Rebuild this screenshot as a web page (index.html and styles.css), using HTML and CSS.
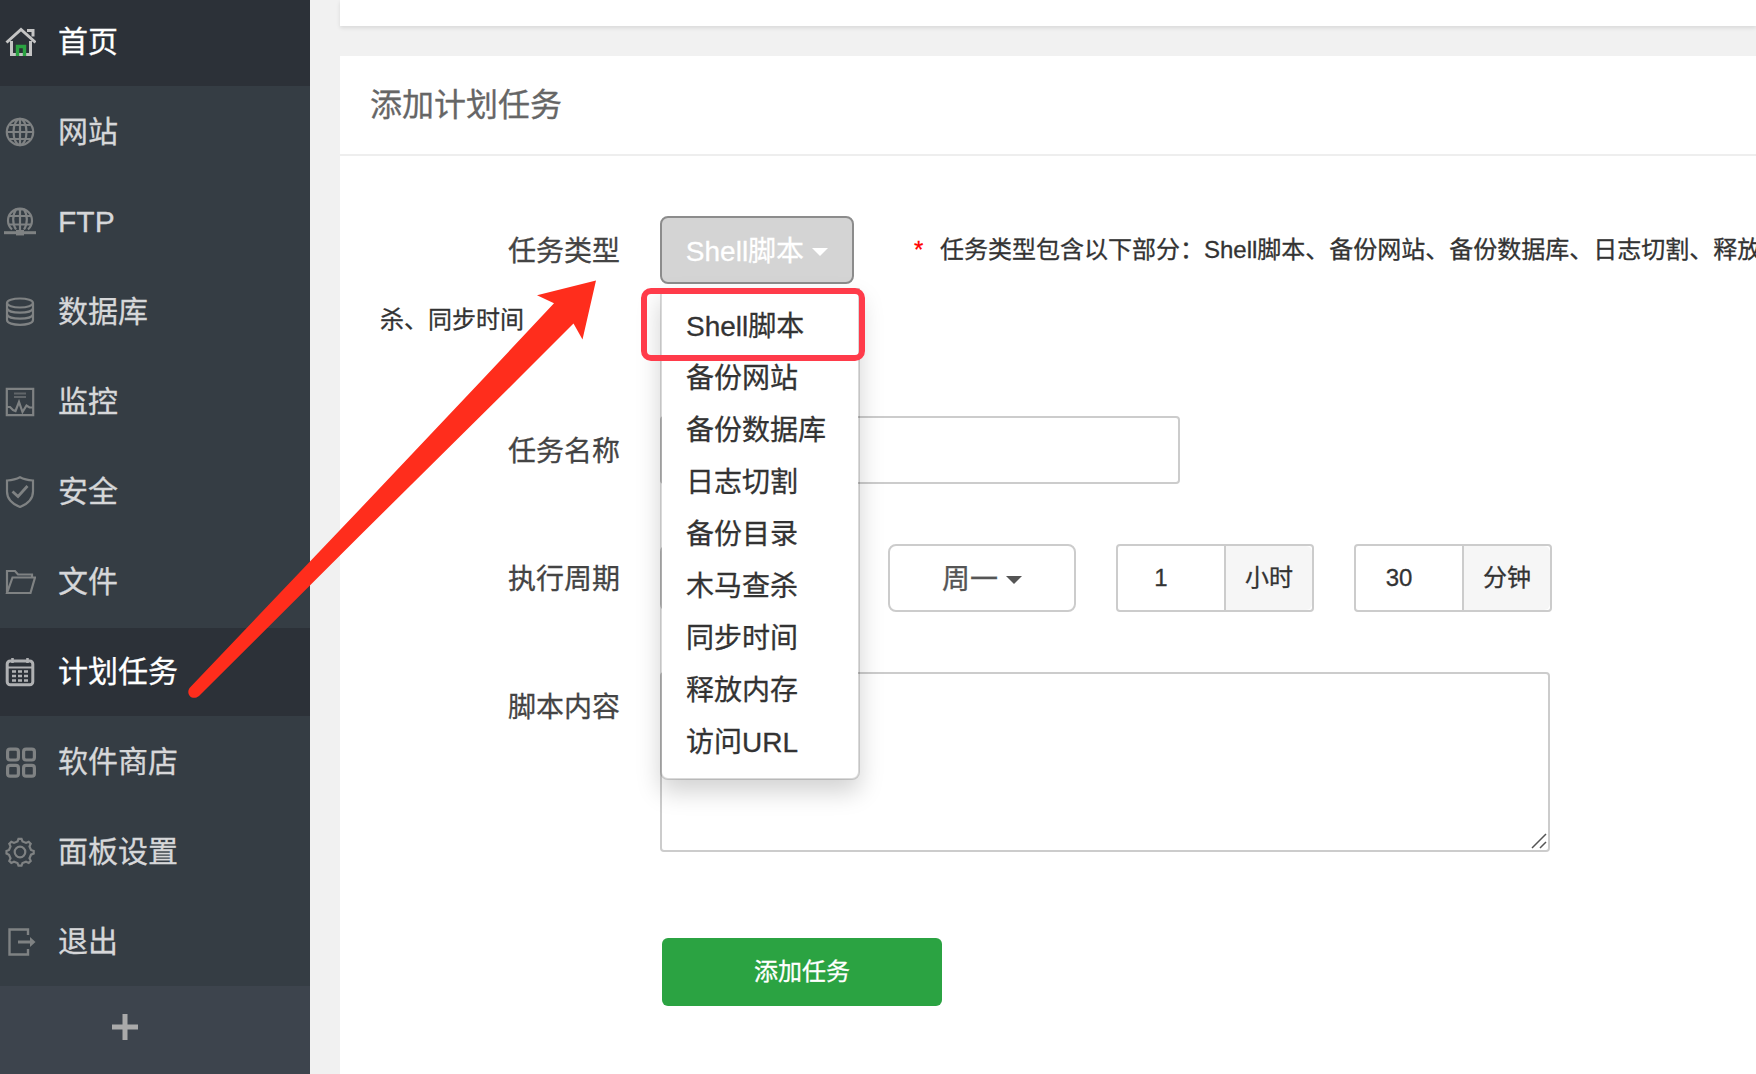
FILE: index.html
```html
<!DOCTYPE html>
<html lang="zh-CN">
<head>
  <meta charset="UTF-8" />
  <title>计划任务</title>
  <meta name="viewport" content="width=device-width, initial-scale=1.0" />
  <link rel="stylesheet" href="styles.css">
</head>
<body>
  <nav class="sidebar">
    <ul class="menu">
      <li class="current">
        <svg class="icon" viewBox="0 0 32 32"><path d="M2.5 16.5 17 3.5l14.500 13M23 4.500h6v6M7.500 15v13.500h19V15" stroke="#c4c4c4" stroke-width="3"/><path d="M13.500 30v-9.500h7V30" stroke="#2ba342" stroke-width="3.400"/></svg>
        <span>首页</span>
      </li>
      <li>
        <svg class="icon" viewBox="0 0 32 32"><circle cx="16" cy="16" r="13.200"/><ellipse cx="16" cy="16" rx="6.500" ry="13.200"/><path d="M16 3v26M3 16h26M5.500 9h21M5.500 23h21"/></svg>
        <span>网站</span>
      </li>
      <li>
        <svg class="icon" viewBox="0 0 32 32"><path d="M8 23.500a12 12 0 1 1 16 0"/><path d="M12 23.500c-4-6-3.500-15 0-20h8c3.500 5 4 14 0 20M16 3v21M5 10h22M5 18.500h22"/><path d="M0 26.700h32" stroke-width="3"/><path d="M12 26.700h8" stroke-width="5.500"/></svg>
        <span>FTP</span>
      </li>
      <li>
        <svg class="icon" viewBox="0 0 32 32"><ellipse cx="16" cy="7" rx="13" ry="4.500"/><path d="M3 7v17c0 6.500 26 6.500 26 0V7M3 12.500c2 5.500 24 5.500 26 0M3 18.500c2 5.500 24 5.500 26 0"/></svg>
        <span>数据库</span>
      </li>
      <li>
        <svg class="icon" viewBox="0 0 32 32"><path d="M2.800 2.800h26.400v26.400H2.800z"/><path d="M10 7.500h12M10 11h12" opacity=".6"/><path d="M3 21h3l3 3 2.500 1L15 16l3.500 10 4-6.500 3 2H29"/></svg>
        <span>监控</span>
      </li>
      <li>
        <svg class="icon" viewBox="0 0 32 32"><path d="M16 1.200c4 2.200 8.500 3 13 3.300v11C29 23 23.500 28 16 31 8.500 28 3 23 3 15.500v-11c4.500-.3 9-1.100 13-3.300z"/><path d="m8.500 15.500 5.500 5 9.500-10.500" stroke-width="2.800"/></svg>
        <span>安全</span>
      </li>
      <li>
        <svg class="icon" viewBox="0 0 32 32"><path d="M3 27V5h8l3 3.500h14V12M3 27 8.500 11.500H31L26.500 27z"/></svg>
        <span>文件</span>
      </li>
      <li class="current">
        <svg class="icon" viewBox="0 0 32 32"><rect x="3.200" y="5" width="25.600" height="23.800" rx="3" stroke-width="3"/><path d="M4 11.500h24" stroke-width="2"/><path d="M8.500 2v5M23.500 2v5" stroke-width="2.600"/><path d="M8 15.500h16M8 20h16M8 24.500h16" stroke-width="2.600" stroke-dasharray="4 2"/></svg>
        <span>计划任务</span>
      </li>
      <li>
        <svg class="icon" viewBox="0 0 32 32"><g stroke-width="3.200"><rect x="3.600" y="3.200" width="10.800" height="10.800" rx="2.500"/><rect x="19.600" y="3.200" width="10.800" height="10.800" rx="2.500"/><rect x="3.600" y="19.400" width="10.800" height="10.800" rx="2.500"/><rect x="19.600" y="19.400" width="10.800" height="10.800" rx="2.500"/></g></svg>
        <span>软件商店</span>
      </li>
      <li>
        <svg class="icon" viewBox="0 0 32 32"><circle cx="16" cy="16" r="5.300"/><path d="m13.500 5.500 1-2.700h3l1 2.700 3.500 1.400 2.700-1.200 2 2-1.200 2.800 1.500 3.500 2.700 1v2.500l-2.700 1.200-1.500 3.500 1.200 2.700-2 2-2.700-1.200-3.500 1.400-1 2.500h-3l-1-2.500-3.500-1.400-2.700 1.200-2-2 1.200-2.700L5 18.700l-2.500-1.200V15L5 14l1.500-3.500-1.200-2.800 2-2L10 6.900z"/></svg>
        <span>面板设置</span>
      </li>
      <li>
        <svg class="icon" viewBox="0 0 32 32"><path d="M24 9V3.500H5.500v25H24V23" stroke-width="2.400"/><path d="M14 16h13" stroke-width="3"/><path d="m26 11 5.500 5-5.500 5z" fill="currentColor" stroke="none"/></svg>
        <span>退出</span>
      </li>
    </ul>
    <div class="add">
      <svg width="26" height="26" viewBox="0 0 26 26"><path d="M13 0v26M0 13h26" stroke="#aaa" stroke-width="5"/></svg>
    </div>
  </nav>

  <main class="content">
    <section class="card list"></section>
    <section class="card task">
      <h1>添加计划任务</h1>
      <form class="form">
        <div class="row type">
          <label>任务类型</label>
          <div class="dropdown">
            <button type="button" class="btn open">Shell脚本<i class="caret"></i></button>
            <ul class="dropdown-menu">
              <li>Shell脚本</li>
              <li>备份网站</li>
              <li>备份数据库</li>
              <li>日志切割</li>
              <li>备份目录</li>
              <li>木马查杀</li>
              <li>同步时间</li>
              <li>释放内存</li>
              <li>访问URL</li>
            </ul>
            <div class="mark"></div>
          </div>
          <p class="tip"><b>*</b>任务类型包含以下部分：Shell脚本、备份网站、备份数据库、日志切割、释放</p>
        </div>
        <p class="tip-rest">杀、同步时间</p>

        <div class="row name">
          <label>任务名称</label>
          <input type="text" class="field" />
        </div>

        <div class="row cycle">
          <label>执行周期</label>
          <button type="button" class="btn week"></button>
          <button type="button" class="btn week">周一<i class="caret"></i></button>
          <div class="unit"><input type="text" value="1" /><span>小时</span></div>
          <div class="unit"><input type="text" value="30" /><span>分钟</span></div>
        </div>

        <div class="row script">
          <label>脚本内容</label>
          <div class="area">
            <textarea></textarea>
            <svg class="grip" width="16" height="16" viewBox="0 0 16 16"><path d="M1 15 15 1M9 15l6-6" stroke="#555" stroke-width="1.500"/></svg>
          </div>
        </div>

        <button type="button" class="submit">添加任务</button>
      </form>
    </section>
  </main>

  <svg class="arrow" width="620" height="720" viewBox="0 0 620 720">
    <path d="M596 280.500 537 295.300l17 8L482 380 360 509 190 687.500c-5 6 2 14 9 8.500L360 535.500 517 380l56.500-56.500 9 16z" fill="#ff2d1c"/>
  </svg>
</body>
</html>
```
FILE: styles.css
```css
* {
  box-sizing: border-box;
  margin: 0;
  padding: 0;
}

body {
  font-family: "Liberation Sans", "Noto Sans CJK SC", sans-serif;
  -webkit-text-stroke: 0.3px;
  background: #f1f1f1;
  color: #333;
  display: flex;
  width: 100%;
  height: 1074px;
  overflow: hidden;
}

ul {
  list-style: none;
}

button, input, textarea {
  font-family: inherit;
  color: inherit;
}

/* sidebar */
.sidebar {
  width: 310px;
  flex: none;
  background: #353d44;
  display: flex;
  flex-direction: column;
}

.menu {
  margin-top: -4px;
}

.menu li {
  height: 90px;
  border-top: 2px solid #353d44;
  padding-left: 4px;
  display: flex;
  align-items: center;
  gap: 22px;
  font-size: 30px;
  line-height: 34px;
  color: #d6d7d9;
}

.menu li span {
  padding-bottom: 1px;
}

.menu li.current {
  background: #2c3138;
  color: #fff;
}

.icon {
  width: 32px;
  height: 32px;
  flex: none;
  fill: none;
  stroke: currentColor;
  stroke-width: 2.2;
  color: #7f8283;
}

.current .icon {
  color: #b0b1b3;
}

.add {
  flex: 1;
  background: #3d444d;
  padding: 28px 0 0 112px;
}

.add svg {
  display: block;
}

/* content */
.content {
  flex: 1;
  min-width: 0;
  padding-left: 30px;
  display: flex;
  flex-direction: column;
  gap: 30px;
}

.card {
  background: #fff;
}

.list {
  height: 26px;
  flex: none;
  box-shadow: 0 2px 4px rgba(0, 0, 0, 0.1);
}

.task {
  flex: 1;
}

h1 {
  height: 100px;
  padding-left: 30px;
  border-bottom: 2px solid #eee;
  font-size: 32px;
  font-weight: normal;
  line-height: 98px;
  color: #666;
}

.form {
  padding: 60px 0 0 40px;
}

.row {
  display: flex;
}

.row label {
  width: 280px;
  height: 68px;
  padding-right: 40px;
  flex: none;
  text-align: right;
  font-size: 28px;
  line-height: 72px;
  color: #444;
}

.btn {
  height: 68px;
  border: 2px solid #ccc;
  border-radius: 8px;
  padding: 3px 0 0;
  background: #fff;
  color: #555;
  font-size: 28px;
  line-height: 60px;
  white-space: nowrap;
  display: flex;
  align-items: center;
  justify-content: center;
}

.btn.open {
  width: 194px;
  background: #d4d4d4;
  border-color: #8c8c8c;
  color: #fff;
}

.caret {
  margin: 1px 0 0 8px;
  border-top: 8px solid;
  border-left: 8px solid transparent;
  border-right: 8px solid transparent;
}

.dropdown {
  position: relative;
}

.dropdown-menu {
  position: absolute;
  z-index: 2;
  top: 72px;
  left: 0;
  width: 200px;
  padding: 11px 0 9px;
  background: #fff;
  background-clip: padding-box;
  border: 2px solid rgba(0, 0, 0, 0.15);
  border-radius: 0 0 8px 8px;
  box-shadow: 0 12px 24px rgba(0, 0, 0, 0.175);
}

.dropdown-menu li {
  padding-left: 24px;
  font-size: 28px;
  line-height: 52px;
}

/* red frame round the chosen option */
.mark {
  position: absolute;
  z-index: 3;
  top: 72px;
  left: -19px;
  width: 224px;
  height: 73px;
  border: 6px solid #ff3b4a;
  border-radius: 10px;
}

.tip {
  height: 68px;
  margin-left: 60px;
  font-size: 24px;
  line-height: 68px;
  white-space: nowrap;
}

.tip b {
  display: inline-block;
  width: 26px;
  font-weight: normal;
  color: #f00;
}

.tip-rest {
  height: 70px;
  font-size: 24px;
  line-height: 72px;
}

.name {
  margin-top: 62px;
}

.field {
  width: 520px;
  height: 68px;
  border: 2px solid #ccc;
  border-radius: 4px;
}

.cycle {
  margin-top: 60px;
}

.week {
  width: 188px;
  margin-right: 40px;
}

.unit {
  width: 198px;
  height: 68px;
  margin-right: 40px;
  border: 2px solid #ccc;
  border-radius: 4px;
  display: flex;
  font-size: 24px;
}

.unit input {
  width: 106px;
  padding-right: 20px;
  border: none;
  background: none;
  font-size: 24px;
  text-align: center;
}

.unit span {
  flex: 1;
  border-left: 2px solid #ccc;
  border-radius: 0 6px 6px 0;
  background: #f6f6f6;
  line-height: 64px;
  text-align: center;
}

.script {
  margin-top: 60px;
}

.area {
  position: relative;
  width: 890px;
  height: 180px;
}

.area textarea {
  display: block;
  width: 100%;
  height: 100%;
  border: 2px solid #ccc;
  border-radius: 4px;
  resize: none;
}

.grip {
  position: absolute;
  right: 3px;
  bottom: 3px;
}

.submit {
  display: block;
  width: 280px;
  height: 68px;
  margin: 86px 0 0 282px;
  border: none;
  border-radius: 6px;
  background: #2ba342;
  color: #fff;
  font-size: 24px;
  line-height: 68px;
}

.arrow {
  position: absolute;
  z-index: 4;
  top: 0;
  left: 0;
  pointer-events: none;
}
```
